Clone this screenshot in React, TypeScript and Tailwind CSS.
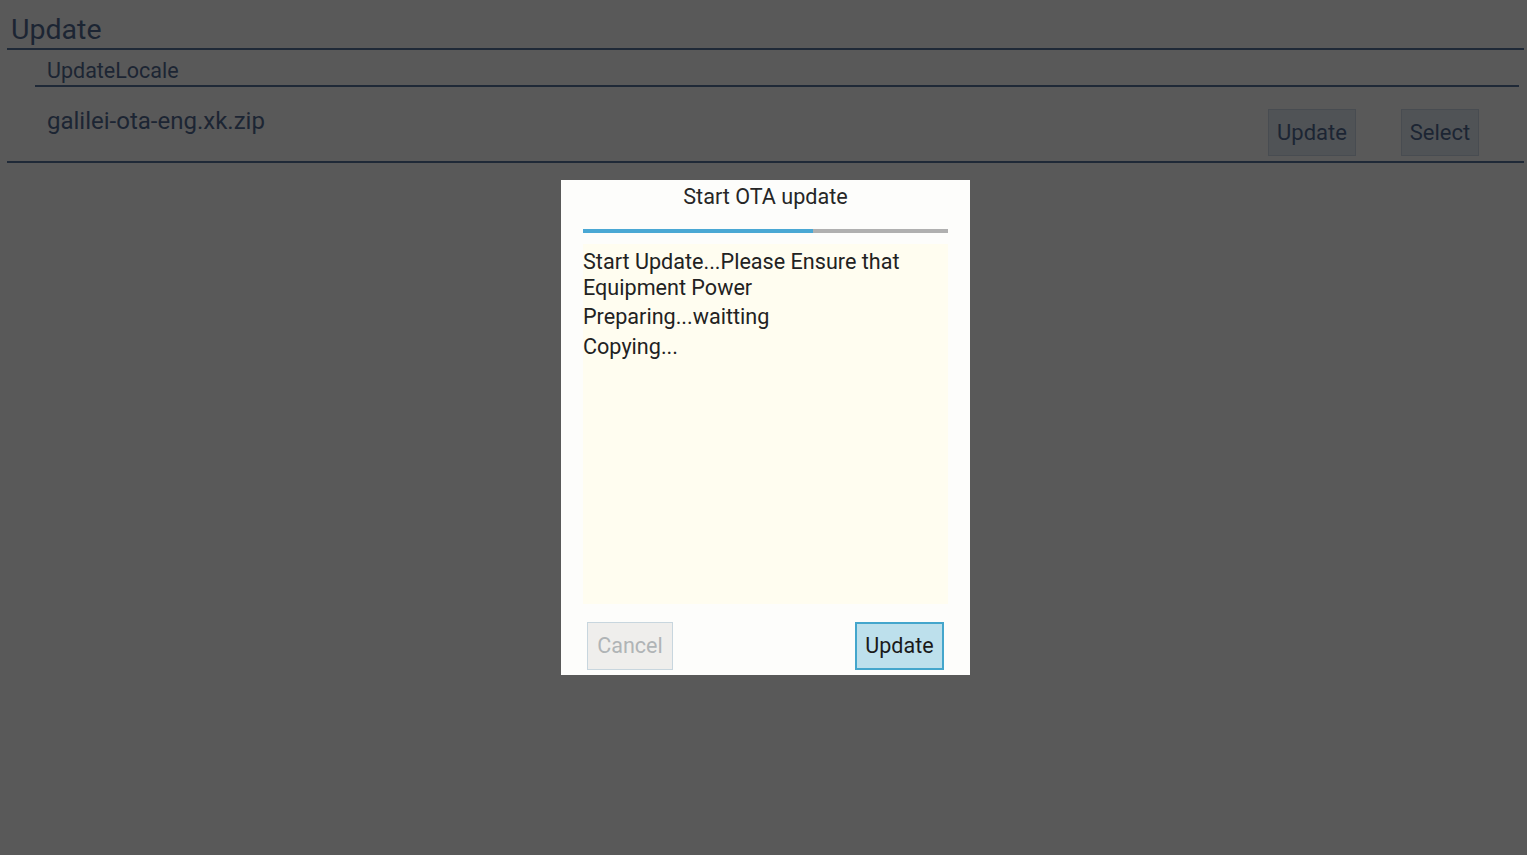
import React from "react";

export default function App() {
  const font = { fontFamily: "Roboto, 'Noto Sans', sans-serif" };
  return (
    <div className="relative w-[1527px] h-[855px] bg-[#595959] overflow-hidden text-[#1c2533]" style={font}>
      <div className="flex flex-col pt-[12px]">
        <div className="px-[11px] text-[28.5px] leading-[34px] h-[36px] pt-[1px]">Update</div>
        <div className="ml-[7px] mr-[3px] h-[2px] bg-[#1f2937]" />
        <div className="pl-[47px] pt-[9px] text-[21.5px] leading-[24px] h-[35px]">UpdateLocale</div>
        <div className="ml-[35px] mr-[8px] h-[2px] bg-[#1f2937]" />
        <div className="flex items-start pt-[22px] h-[74px]">
          <div className="pl-[47px] text-[24px] leading-[28px] -mt-[2px] flex-1">galilei-ota-eng.xk.zip</div>
          <div className="w-[88px] h-[47px] bg-[#505356] border border-[#484c51] flex items-center justify-center text-[22px]">Update</div>
          <div className="w-[45px]" />
          <div className="w-[78px] h-[47px] bg-[#505356] border border-[#484c51] flex items-center justify-center text-[22px]">Select</div>
          <div className="w-[48px]" />
        </div>
        <div className="ml-[7px] mr-[3px] h-[2px] bg-[#1f2937]" />
      </div>

      <div className="absolute left-[561px] top-[180px] w-[409px] h-[495px] bg-[#fdfdfb] flex flex-col">
        <div className="text-center text-[21.6px] leading-[24px] pt-[5px] h-[29px] text-[#262626]">Start OTA update</div>
        <div className="mx-[22px] mt-[20px] h-[4px] flex bg-[#b0b0b0]">
          <div className="w-[230px] h-full bg-[#4aa8d4]" />
        </div>
        <div className="mx-[22px] mt-[11px] h-[360px] bg-[#fffdf0] text-[21.6px] leading-[26px] text-[#222] pt-[5px]">
          <div>Start Update...Please Ensure that Equipment Power</div>
          <div className="mt-[3px]">Preparing...waitting</div>
          <div className="mt-[4px]">Copying...</div>
        </div>
        <div className="flex justify-between mt-[18px] pl-[26px] pr-[26px]">
          <div className="w-[86px] h-[48px] bg-[#efeeec] border border-[#c8d6de] flex items-center justify-center text-[21.5px] text-[#b0b4b6]">Cancel</div>
          <div className="w-[89px] h-[48px] bg-[#bde0ec] border-2 border-[#44a6cc] flex items-center justify-center text-[21.5px] text-[#1a1a1a]">Update</div>
        </div>
      </div>
    </div>
  );
}
